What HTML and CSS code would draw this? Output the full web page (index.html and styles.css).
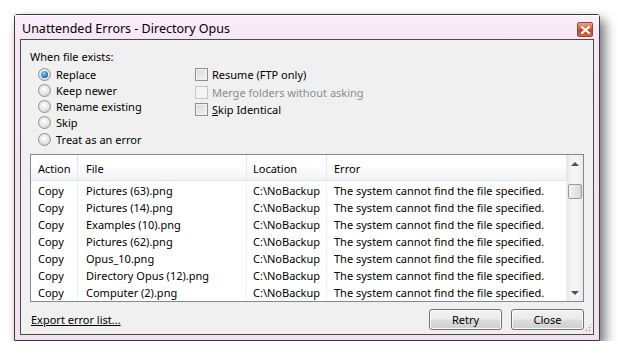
FILE: index.html
```html
<!DOCTYPE html>
<html lang="en">
<head>
    <meta charset="UTF-8">
    <title>Unattended Errors - Directory Opus</title>
    <link rel="stylesheet" href="styles.css">
</head>
<body>
    <div class="window">
        <div class="titlebar">
            <span class="title">Unattended Errors - Directory Opus</span>
            <span class="close-btn">
                <svg width="9" height="8" viewBox="0 0 9 8">
                    <path d="M1 1 L8 7 M8 1 L1 7" stroke="#fff" stroke-width="2.2" stroke-linecap="square"/>
                </svg>
            </span>
        </div>
        <div class="client">
            <div class="group-label">When file exists:</div>
            <div class="options">
                <div class="radios">
                    <label class="opt"><span class="radio checked"></span>Replace</label>
                    <label class="opt"><span class="radio"></span>Keep newer</label>
                    <label class="opt"><span class="radio"></span>Rename existing</label>
                    <label class="opt"><span class="radio"></span>Skip</label>
                    <label class="opt"><span class="radio"></span>Treat as an error</label>
                </div>
                <div class="checks">
                    <label class="chk"><span class="box"></span>Resume (FTP only)</label>
                    <label class="chk disabled"><span class="box"></span>Merge folders without asking</label>
                    <label class="chk"><span class="box"></span><u>S</u>kip Identical</label>
                </div>
            </div>
            <div class="list">
                <div class="list-body">
                    <div class="list-head">
                        <div class="col c-action">Action</div>
                        <div class="col c-file">File</div>
                        <div class="col c-loc">Location</div>
                        <div class="col c-err">Error</div>
                    </div>
                    <div class="rows">
                        <!-- error rows -->
                        <div class="row"><div class="c-action">Copy</div><div class="c-file">Pictures (63).png</div><div class="c-loc">C:\NoBackup</div><div class="c-err">The system cannot find the file specified.</div></div>
                        <div class="row"><div class="c-action">Copy</div><div class="c-file">Pictures (14).png</div><div class="c-loc">C:\NoBackup</div><div class="c-err">The system cannot find the file specified.</div></div>
                        <div class="row"><div class="c-action">Copy</div><div class="c-file">Examples (10).png</div><div class="c-loc">C:\NoBackup</div><div class="c-err">The system cannot find the file specified.</div></div>
                        <div class="row"><div class="c-action">Copy</div><div class="c-file">Pictures (62).png</div><div class="c-loc">C:\NoBackup</div><div class="c-err">The system cannot find the file specified.</div></div>
                        <div class="row"><div class="c-action">Copy</div><div class="c-file">Opus_10.png</div><div class="c-loc">C:\NoBackup</div><div class="c-err">The system cannot find the file specified.</div></div>
                        <div class="row"><div class="c-action">Copy</div><div class="c-file">Directory Opus (12).png</div><div class="c-loc">C:\NoBackup</div><div class="c-err">The system cannot find the file specified.</div></div>
                        <div class="row"><div class="c-action">Copy</div><div class="c-file">Computer (2).png</div><div class="c-loc">C:\NoBackup</div><div class="c-err">The system cannot find the file specified.</div></div>
                    </div>
                </div>
                <div class="scrollbar">
                    <div class="arrow up"></div>
                    <div class="track"><div class="thumb"></div></div>
                    <div class="arrow down"></div>
                </div>
            </div>
            <div class="footer">
                <span class="export-link">Export error list...</span>
                <div class="buttons">
                    <span class="btn">Retry</span>
                    <span class="btn">Close</span>
                </div>
            </div>
            <span class="grip"></span>
        </div>
    </div>
</body>
</html>
```

FILE: styles.css
```css
body {
    margin: 0;
    background: #ffffff;
    font-family: "Noto Sans", "Open Sans", sans-serif;
    font-size: 11px;
    color: #000;
}
.window {
    margin: 14px 0 0 14px;
    width: 586px;
    height: 327px;
    box-sizing: border-box;
    border: 1px solid #3a3a3a;
    border-radius: 3px 3px 0 0;
    background: linear-gradient(to bottom, #f8e6f6, #f3e1f1);
    box-shadow: 5px 6px 12px rgba(0, 0, 0, 0.55);
    display: flex;
    flex-direction: column;
}
.titlebar {
    height: 23px;
    display: flex;
    align-items: center;
    justify-content: space-between;
    padding: 0 6px 0 7px;
    background: linear-gradient(to bottom, #fbeefb, #f7e5f5);
    border-top: 1px solid #ffffff;
}
.title {
    font-size: 12.5px;
    margin-top: 1px;
}
.close-btn {
    width: 16px;
    height: 15px;
    box-sizing: border-box;
    border: 1px solid #8e4a3a;
    border-radius: 2px;
    background: linear-gradient(to bottom, #e9a48c, #d2583a 50%, #c23f21 51%, #d56544);
    display: flex;
    align-items: center;
    justify-content: center;
    margin-top: 4px;
}
.client {
    flex: 1;
    margin: 0 5px 5px 5px;
    border: 1px solid #4a4a4a;
    background: #f0f0f0;
    padding: 9px 9px 0 9px;
    position: relative;
}
.group-label {
    line-height: 16px;
}
.options {
    display: flex;
    margin-top: 1px;
}
.radios {
    width: 157px;
    padding-left: 8px;
    display: flex;
    flex-direction: column;
}
.opt, .chk {
    display: flex;
    align-items: center;
    white-space: nowrap;
}
.opt {
    height: 16.25px;
}
.chk {
    height: 17.6px;
}
.radio {
    width: 13px;
    height: 13px;
    box-sizing: border-box;
    border-radius: 50%;
    border: 1px solid #8e8f8f;
    background: radial-gradient(circle at 45% 40%, #ffffff, #e0e0e0 60%, #c9c9c9);
    margin-right: 5px;
    position: relative;
}
.radio.checked::after {
    content: "";
    position: absolute;
    left: 2px;
    top: 2px;
    width: 7px;
    height: 7px;
    border-radius: 50%;
    background: radial-gradient(circle at 40% 35%, #8fd3f5, #1f6aa8 70%, #17507f);
}
.box {
    width: 13px;
    height: 13px;
    box-sizing: border-box;
    border: 1px solid #8e8f8f;
    background: linear-gradient(135deg, #d8d8d8, #f4f4f4);
    box-shadow: inset 0 0 0 1px #f4f4f4;
    margin-right: 4px;
}
.chk.disabled {
    color: #8d8d8d;
}
.chk.disabled .box {
    border-color: #c6c6c6;
    background: #f4f4f4;
}
.list {
    margin-top: 7px;
    height: 148px;
    box-sizing: border-box;
    border: 1px solid #828790;
    background: #ffffff;
    display: flex;
}
.list-body {
    width: 536px;
}
.list-head, .row {
    display: grid;
    grid-template-columns: 47px 169px 80px 240px;
}
.list-head {
    height: 25px;
    background: linear-gradient(to bottom, #ffffff 40%, #f1f2f4);
    border-bottom: 1px solid #e5e5e5;
}
.list-head .col {
    display: flex;
    align-items: center;
    padding-top: 2px;
    border-right: 1px solid #e3e8ee;
}
.rows {
    padding-top: 1px;
}
.row {
    height: 17px;
    line-height: 17px;
    white-space: nowrap;
}
.row > div {
    border-right: 1px solid #eaf1fb;
    overflow: hidden;
}
.c-action {
    padding-left: 7px;
}
.c-file {
    padding-left: 8px;
}
.c-loc {
    padding-left: 6px;
}
.c-err {
    padding-left: 7px;
}
.scrollbar {
    width: 17px;
    background: linear-gradient(to right, #e6e6e6, #f4f4f4 30%, #f4f4f4 70%, #e8e8e8);
    display: flex;
    flex-direction: column;
}
.arrow {
    height: 17px;
    display: flex;
    align-items: center;
    justify-content: center;
}
.arrow.up::before {
    content: "";
    border-left: 4px solid transparent;
    border-right: 4px solid transparent;
    border-bottom: 4px solid #505050;
}
.arrow.down::before {
    content: "";
    border-left: 4px solid transparent;
    border-right: 4px solid transparent;
    border-top: 4px solid #505050;
}
.track {
    flex: 1;
    padding-top: 12px;
}
.thumb {
    margin: 0 1px;
    height: 15px;
    box-sizing: border-box;
    border: 1px solid #9a9a9a;
    border-radius: 2px;
    background: linear-gradient(to right, #f3f3f3, #e6e6e6 50%, #d6d6d6);
}
.footer {
    display: flex;
    align-items: center;
    justify-content: space-between;
    margin-top: 7px;
}
.export-link {
    text-decoration: underline;
    padding-left: 1px;
}
.buttons {
    display: flex;
    gap: 9px;
}
.btn {
    width: 73px;
    height: 21px;
    box-sizing: border-box;
    border: 1px solid #707070;
    border-radius: 3px;
    background: linear-gradient(to bottom, #f2f2f2 0%, #ebebeb 48%, #dddddd 52%, #cfcfcf 100%);
    box-shadow: inset 0 0 0 1px #fcfcfc;
    display: flex;
    align-items: center;
    justify-content: center;
}
.grip {
    position: absolute;
    right: 1px;
    bottom: 1px;
    width: 10px;
    height: 10px;
    background: radial-gradient(circle, #b5b5b5 0.8px, transparent 1.2px) 0 0 / 3px 3px;
    clip-path: polygon(100% 0, 100% 100%, 0 100%);
}
```
